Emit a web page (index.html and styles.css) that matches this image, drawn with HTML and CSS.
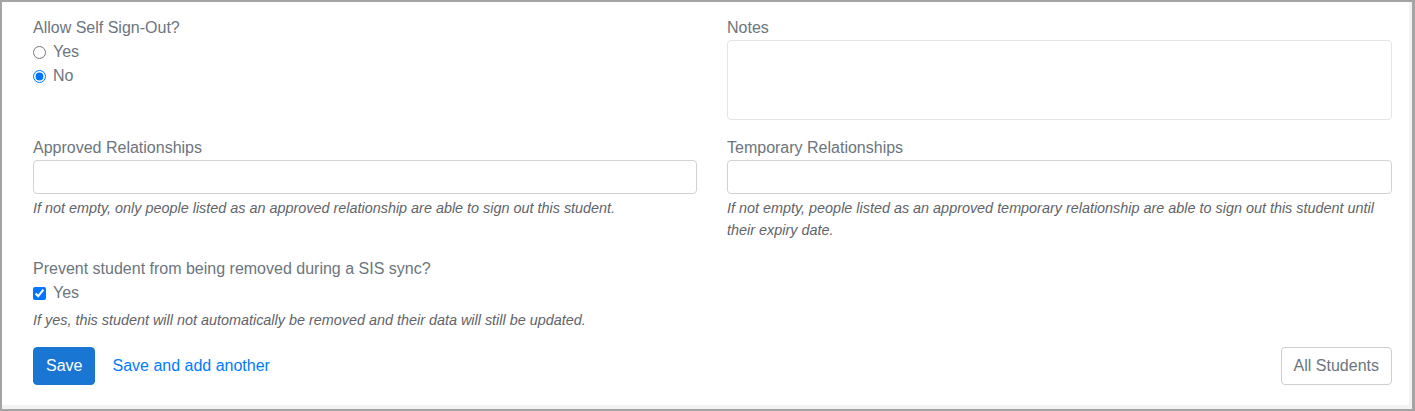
FILE: index.html
```html
<!DOCTYPE html>
<html lang="en">
<head>
<meta charset="utf-8">
<title>Student settings</title>
<link rel="stylesheet" href="styles.css">
</head>
<body>
<div class="frame">
  <form class="card">
    <div class="grid">
      <div class="field">
        <div class="label">Allow Self Sign-Out?</div>
        <label class="option"><input type="radio" name="self" class="control"> Yes</label>
        <label class="option"><input type="radio" name="self" class="control" checked> No</label>
      </div>
      <div class="field">
        <div class="label">Notes</div>
        <textarea class="textarea"></textarea>
      </div>
      <div class="field">
        <div class="label">Approved Relationships</div>
        <input type="text" class="input">
        <div class="help">If not empty, only people listed as an approved relationship are able to sign out this student.</div>
      </div>
      <div class="field">
        <div class="label">Temporary Relationships</div>
        <input type="text" class="input">
        <div class="help">If not empty, people listed as an approved temporary relationship are able to sign out this student until their expiry date.</div>
      </div>
      <div class="field">
        <div class="label">Prevent student from being removed during a SIS sync?</div>
        <label class="option"><input type="checkbox" class="control" checked> Yes</label>
        <div class="help help-spaced">If yes, this student will not automatically be removed and their data will still be updated.</div>
      </div>
    </div>
    <div class="actions">
      <button type="button" class="btn btn-primary">Save</button>
      <a href="#" class="link">Save and add another</a>
      <span class="spacer"></span>
      <button type="button" class="btn btn-outline">All Students</button>
    </div>
  </form>
</div>
</body>
</html>
```
FILE: styles.css
```css
* { box-sizing: border-box; }
html, body { margin: 0; padding: 0; background: #ffffff; }
body {
  font-family: "Liberation Sans", Arial, sans-serif;
  font-size: 16px;
  line-height: 24px;
  color: #6c757d;
}
.frame {
  height: 411px;
  border-style: solid;
  border-color: #a4a4a4;
  border-width: 2px 3px 2px 2px;
  background: #f3f3f3;
  display: flex;
  flex-direction: column;
}
.card {
  flex: 1;
  margin: 0 3px 4px 0;
  background: #ffffff;
  padding: 14px 17px 0 31px;
  display: flex;
  flex-direction: column;
}
.grid {
  display: grid;
  grid-template-columns: 664px 665px;
  column-gap: 30px;
  row-gap: 16px;
  align-items: start;
}
.field { display: flex; flex-direction: column; }
.label { color: #6c757d; }
.option {
  display: flex;
  align-items: center;
  gap: 7px;
  color: #6c757d;
}
.control {
  margin: 0;
  width: 13px;
  height: 13px;
  accent-color: #0075ff;
}
.textarea {
  display: block;
  width: 100%;
  height: 80px;
  border: 1px solid #e5e5e5;
  border-radius: 4px;
  resize: none;
  font: inherit;
  padding: 6px 12px;
  background: #fff;
}
.input {
  display: block;
  width: 100%;
  height: 34px;
  border: 1px solid #d2d2d2;
  border-radius: 4px;
  font: inherit;
  padding: 4px 12px;
  background: #fff;
}
.help {
  margin-top: 3px;
  font-size: 14.4px;
  line-height: 22px;
  font-style: italic;
  color: #5f6469;
}
.help-spaced { margin-top: 4px; }
.actions {
  display: flex;
  align-items: center;
  margin-top: 16px;
}
.btn {
  font: inherit;
  font-size: 16px;
  line-height: 24px;
  padding: 6px 12px;
  border-radius: 4px;
  border: 1px solid transparent;
  cursor: pointer;
}
.btn-primary {
  background: #1976d2;
  border-color: #1976d2;
  color: #ffffff;
}
.btn-outline {
  background: #ffffff;
  border-color: #cfcfcf;
  color: #6c757d;
}
.link {
  margin-left: 17px;
  color: #007bff;
  text-decoration: none;
}
.spacer { flex: 1; }
```
